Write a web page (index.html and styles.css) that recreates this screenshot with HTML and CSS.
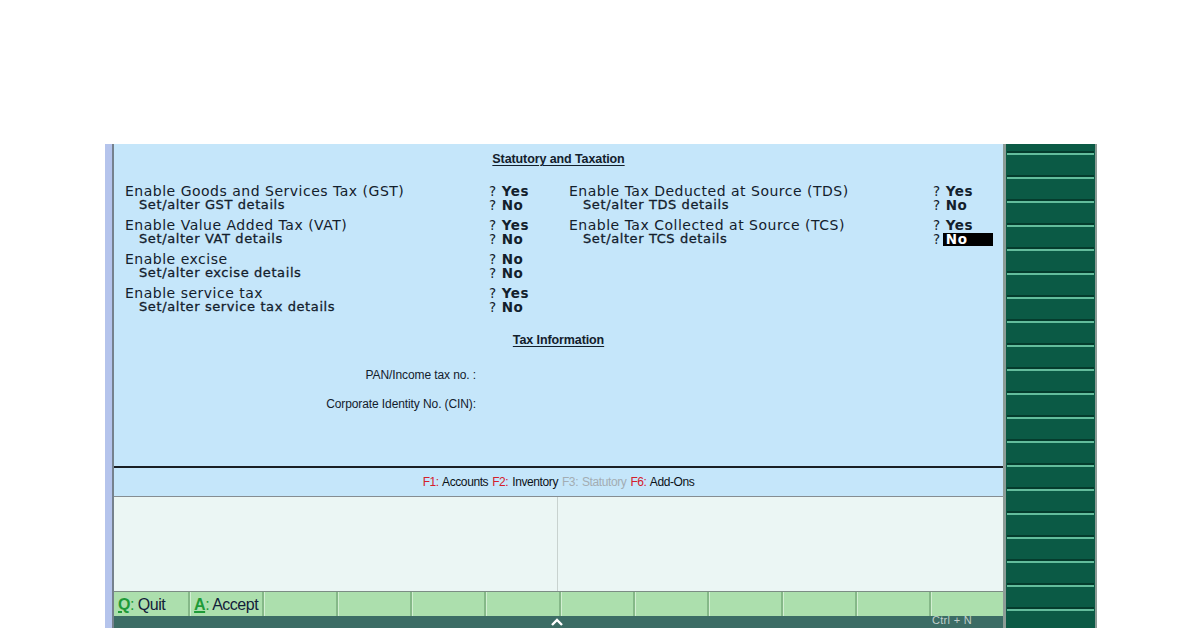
FILE: index.html
```
<!DOCTYPE html>
<html>
<head>
<meta charset="utf-8">
<link rel="stylesheet" href="styles.css">
</head>
<body>
<div class="screen">
  <div class="edge"></div>
  <div class="main">
    <div class="content">
      <div class="title"><span>Statutory and Taxation</span></div>
      <div class="options">
        <div class="col">
          <div class="pair">
            <div class="row"><span class="lbl">Enable Goods and Services Tax (GST)</span><span class="val">? <b>Yes</b></span></div>
            <div class="row sub"><span class="lbl">Set/alter GST details</span><span class="val">? <b>No</b></span></div>
          </div>
          <div class="pair">
            <div class="row"><span class="lbl">Enable Value Added Tax (VAT)</span><span class="val">? <b>Yes</b></span></div>
            <div class="row sub"><span class="lbl">Set/alter VAT details</span><span class="val">? <b>No</b></span></div>
          </div>
          <div class="pair">
            <div class="row"><span class="lbl">Enable excise</span><span class="val">? <b>No</b></span></div>
            <div class="row sub"><span class="lbl">Set/alter excise details</span><span class="val">? <b>No</b></span></div>
          </div>
          <div class="pair">
            <div class="row"><span class="lbl">Enable service tax</span><span class="val">? <b>Yes</b></span></div>
            <div class="row sub"><span class="lbl">Set/alter service tax details</span><span class="val">? <b>No</b></span></div>
          </div>
        </div>
        <div class="col">
          <div class="pair">
            <div class="row"><span class="lbl">Enable Tax Deducted at Source (TDS)</span><span class="val">? <b>Yes</b></span></div>
            <div class="row sub"><span class="lbl">Set/alter TDS details</span><span class="val">? <b>No</b></span></div>
          </div>
          <div class="pair">
            <div class="row"><span class="lbl">Enable Tax Collected at Source (TCS)</span><span class="val">? <b>Yes</b></span></div>
            <div class="row sub"><span class="lbl">Set/alter TCS details</span><span class="val">?<b class="cursor">No</b></span></div>
          </div>
        </div>
      </div>
      <div class="title info"><span>Tax Information</span></div>
      <div class="fields">
        <div class="field">PAN/Income tax no. :</div>
        <div class="field">Corporate Identity No. (CIN):</div>
      </div>
    </div>
    <div class="fkeys">
      <span class="key">F1:</span> Accounts <span class="key">F2:</span> Inventory <span class="off">F3: Statutory</span> <span class="key">F6:</span> Add-Ons
    </div>
    <div class="panel">
      <div class="half"></div>
      <div class="half"></div>
    </div>
    <div class="buttons">
      <div class="btn"><u>Q</u><span class="colon">:</span> Quit</div>
      <div class="btn"><u>A</u><span class="colon">:</span> Accept</div>
      <div class="btn"></div>
      <div class="btn"></div>
      <div class="btn"></div>
      <div class="btn"></div>
      <div class="btn"></div>
      <div class="btn"></div>
      <div class="btn"></div>
      <div class="btn"></div>
      <div class="btn"></div>
      <div class="btn"></div>
    </div>
    <div class="status">
      <svg class="caret" width="14" height="8" viewBox="0 0 14 8"><path d="M2 7 L7 2 L12 7" fill="none" stroke="#ffffff" stroke-width="2.4"/></svg>
      <span class="ctrl">Ctrl + N</span>
    </div>
  </div>
  <div class="side">
    <div class="slot first"></div>
    <div class="slot"></div><div class="slot"></div><div class="slot"></div><div class="slot"></div>
    <div class="slot"></div><div class="slot"></div><div class="slot"></div><div class="slot"></div>
    <div class="slot"></div><div class="slot"></div><div class="slot"></div><div class="slot"></div>
    <div class="slot"></div><div class="slot"></div><div class="slot"></div><div class="slot"></div>
    <div class="slot"></div><div class="slot"></div><div class="slot"></div><div class="slot"></div>
  </div>
</div>
</body>
</html>
```

FILE: styles.css
```
html, body {
  margin: 0;
  padding: 0;
  background: #ffffff;
  overflow: hidden;
  height: 628px;
}
.screen {
  display: flex;
  margin-left: 105px;
  margin-top: 144px;
  width: 991px;
  height: 500px;
}
.edge {
  width: 7px;
  background: #b5c4ec;
  border-right: 2px solid #75818d;
  flex: none;
}
.main {
  width: 889px;
  flex: none;
  display: flex;
  flex-direction: column;
  color: #13202c;
}
.content {
  height: 322px;
  background: #c5e6fa;
  border-bottom: 2px solid #1a1f24;
  font-family: "DejaVu Sans", Verdana, "Noto Sans", sans-serif;
}
.title {
  text-align: center;
  padding-top: 8px;
  font-family: "Liberation Sans", Arial, sans-serif;
  font-weight: bold;
  font-size: 12.5px;
  line-height: 14px;
  letter-spacing: -0.1px;
}
.title span {
  text-decoration: underline;
  text-underline-offset: 2px;
}
.options {
  display: grid;
  grid-template-columns: 444px 1fr;
  margin-top: 18px;
  padding-left: 11px;
}
.pair {
  margin-bottom: 6px;
}
.row {
  display: flex;
  font-size: 14px;
  line-height: 14px;
  height: 14px;
  white-space: nowrap;
  letter-spacing: 0.5px;
}
.row .lbl {
  width: 364px;
  flex: none;
}
.row.sub .lbl {
  padding-left: 14px;
  box-sizing: border-box;
  font-size: 13px;
  font-weight: 500;
  letter-spacing: 0.6px;
  -webkit-text-stroke: 0.3px #13202c;
}
.row .val {
  font-size: 13.5px;
  letter-spacing: 0.6px;
}
.row .val b {
  font-weight: bold;
}
.cursor {
  display: inline-block;
  background: #000000;
  color: #ffffff;
  width: 47px;
  padding-left: 3px;
  margin-left: 2px;
  line-height: 13px;
}
.title.info {
  margin-top: 13px;
  padding-top: 0;
}
.fields {
  margin-top: 21px;
  display: flex;
  flex-direction: column;
  gap: 15px;
}
.field {
  width: 362px;
  text-align: right;
  font-family: "Liberation Sans", Arial, sans-serif;
  font-size: 12px;
  line-height: 14px;
  letter-spacing: -0.1px;
}
.fkeys {
  height: 28px;
  line-height: 28px;
  background: #c5e6fa;
  border-bottom: 1px solid #858d92;
  text-align: center;
  font-family: "Liberation Sans", Arial, sans-serif;
  font-size: 12px;
  letter-spacing: -0.4px;
  color: #0c1218;
  word-spacing: 1px;
}
.key {
  color: #d4202c;
}
.off {
  color: #a3adb3;
}
.panel {
  height: 94px;
  display: flex;
  background: #ebf6f4;
  border-bottom: 1px solid #7c8c84;
}
.half {
  flex: 1;
}
.half:first-child {
  flex: none;
  width: 443px;
  border-right: 1px solid #c8d2cf;
}
.buttons {
  display: grid;
  grid-template-columns: repeat(12, 1fr);
  height: 24px;
  background: #acdfad;
}
.btn {
  border-left: 2px solid #85b888;
  box-shadow: inset 1px 0 0 #d2efd2;
  font-family: "Liberation Sans", Arial, sans-serif;
  font-size: 16px;
  line-height: 25px;
  letter-spacing: -0.5px;
  padding-left: 4px;
  color: #13203a;
  white-space: nowrap;
  overflow: hidden;
}
.btn:first-child {
  border-left: none;
  box-shadow: none;
}
.btn u {
  color: #1e9a38;
  font-weight: bold;
  text-decoration-thickness: 2px;
}
.btn .colon {
  color: #1e9a38;
}
.status {
  height: 20px;
  background: #3c6c65;
  position: relative;
}
.caret {
  position: absolute;
  left: 436px;
  top: 2px;
}
.ctrl {
  position: absolute;
  left: 818px;
  top: -1px;
  font-family: "Liberation Sans", Arial, sans-serif;
  font-size: 11px;
  line-height: 11px;
  color: #c2d0cc;
  letter-spacing: 0.3px;
}
.side {
  width: 87px;
  flex: none;
  background: #0b5a45;
  border-left: 3px solid #8c9c96;
  border-right: 2px solid #8c9c96;
  display: flex;
  flex-direction: column;
  padding: 0 1px;
  overflow: hidden;
}
.slot {
  height: 20px;
  flex: none;
  border-top: 2px solid #63bd9c;
  border-bottom: 2px solid #053c2d;
}
.slot.first {
  height: 7px;
  border-top: none;
}
```
